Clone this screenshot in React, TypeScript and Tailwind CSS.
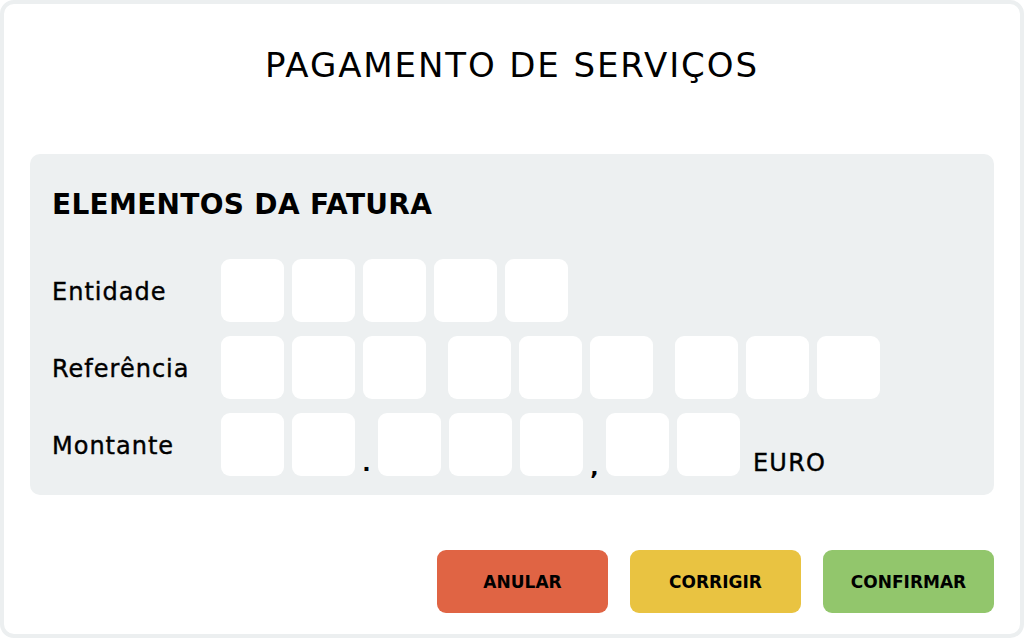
const font = { fontFamily: '"DejaVu Sans", "Noto Sans", sans-serif' }

function Box() {
  return <div className="w-[63px] h-[63px] rounded-[9px] bg-white shrink-0" />
}

function Boxes({ n }: { n: number }) {
  return (
    <div className="flex gap-[8px]">
      {Array.from({ length: n }).map((_, i) => (
        <Box key={i} />
      ))}
    </div>
  )
}

export default function App() {
  return (
    <div
      className="w-[1024px] h-[638px] border-4 border-[#eceff0] rounded-[14px] bg-white flex flex-col text-black"
      style={font}
    >
      {/* titulo */}
      <div className="h-[150px] flex justify-center pt-[37px]">
        <h1 className="text-[34px] font-normal leading-[48px] tracking-[1.9px]">PAGAMENTO DE SERVIÇOS</h1>
      </div>

      {/* elementos da fatura */}
      <div className="mx-[26px] bg-[#edf0f1] rounded-[10px] pl-[22px] pt-[28px] pb-[18px] h-[341px] flex flex-col">
        <h2 className="text-[28px] font-bold leading-[46px] tracking-[0.3px]">ELEMENTOS DA FATURA</h2>
        <div className="mt-[31px] flex flex-col gap-[14px]">
          <div className="flex items-center">
            <span className="w-[169px] text-[24px] tracking-[1px] [-webkit-text-stroke:0.4px_black] pt-[2px]">Entidade</span>
            <Boxes n={5} />
          </div>
          <div className="flex items-center">
            <span className="w-[169px] text-[24px] tracking-[1px] [-webkit-text-stroke:0.4px_black] pt-[2px]">Referência</span>
            <div className="flex gap-[22px]">
              <Boxes n={3} />
              <Boxes n={3} />
              <Boxes n={3} />
            </div>
          </div>
          <div className="flex items-center">
            <span className="w-[169px] text-[24px] tracking-[1px] [-webkit-text-stroke:0.4px_black] pt-[2px]">Montante</span>
            <Boxes n={2} />
            <span className="w-[23px] self-end text-[22px] font-bold text-center leading-[24px]">.</span>
            <Boxes n={3} />
            <span className="w-[23px] self-end text-[22px] font-bold text-center leading-[28px] -mb-[6px]">,</span>
            <Boxes n={2} />
            <span className="self-end ml-[13px] text-[24px] tracking-[1.2px] [-webkit-text-stroke:0.4px_black] leading-[28px] -mb-[1px]">EURO</span>
          </div>
        </div>
      </div>

      {/* botoes */}
      <div className="flex justify-end gap-[22px] mr-[26px] mt-[55px]">
        <button className="w-[171px] h-[63px] rounded-[9px] bg-[#e06444] text-[17px] font-bold pt-[2px]">ANULAR</button>
        <button className="w-[171px] h-[63px] rounded-[9px] bg-[#e9c341] text-[17px] font-bold pt-[2px]">CORRIGIR</button>
        <button className="w-[171px] h-[63px] rounded-[9px] bg-[#92c66c] text-[17px] font-bold pt-[2px]">CONFIRMAR</button>
      </div>
    </div>
  )
}
